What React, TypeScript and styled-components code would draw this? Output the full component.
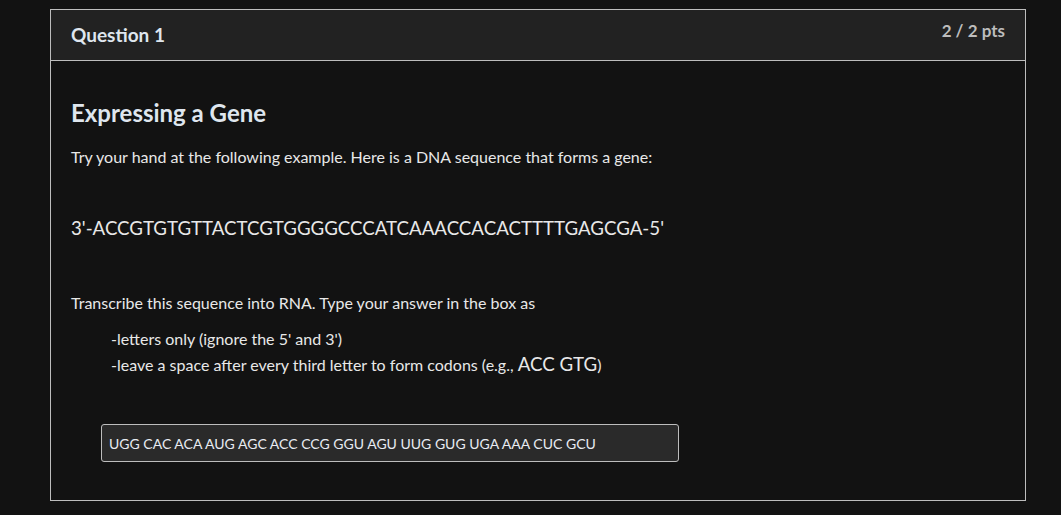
import styled, { createGlobalStyle } from "styled-components";

const GlobalStyle = createGlobalStyle`
  html, body {
    margin: 0;
    padding: 0;
    background-color: #121212;
  }
  body {
    font-family: Lato, "Open Sans", sans-serif;
    color: #e8e8e8;
  }
`;

const Page = styled.div`
  padding: 9px 35px 14px 50px;
  min-height: 515px;
  box-sizing: border-box;
`;

const Card = styled.div`
  border: 1px solid #bdbdbd;
  background-color: #121212;
`;

const Header = styled.div`
  display: flex;
  justify-content: space-between;
  align-items: flex-start;
  background-color: #222222;
  border-bottom: 1px solid #bdbdbd;
  height: 51px;
  box-sizing: border-box;
  padding: 13px 20px 0 20px;
`;

const QuestionName = styled.div`
  font-size: 19px;
  line-height: 23px;
  font-weight: 700;
  color: #dfe6ee;
`;

const Points = styled.div`
  font-size: 17px;
  line-height: 20px;
  font-weight: 700;
  color: #bdbdbd;
  margin-top: -2px;
`;

const Body = styled.div`
  padding: 37px 20px 38px 20px;
`;

const Title = styled.h2`
  margin: 0;
  font-size: 24px;
  line-height: 29px;
  font-weight: 700;
  color: #dfe6ee;
`;

const Text = styled.p<{ gap?: number }>`
  margin: ${(p) => p.gap ?? 0}px 0 0 0;
  font-size: 16px;
  line-height: 24px;
`;

const Sequence = styled.p`
  margin: 46px 0 0 0;
  font-size: 18.7px;
  line-height: 26px;
`;

const List = styled.div`
  margin: 12px 0 0 40px;
  display: flex;
  flex-direction: column;
  gap: 2px;
`;

const Big = styled.span`
  font-size: 18.7px;
  line-height: 1;
`;

const Answer = styled.div`
  margin: 47px 0 0 30px;
  width: 578px;
  height: 38px;
  box-sizing: border-box;
  border: 1px solid #bdbdbd;
  border-radius: 3px;
  background-color: #2a2a2a;
  padding: 0 7px;
  display: flex;
  align-items: center;
  font-size: 14px;
  color: #e8ecf2;
`;

export default function App() {
  return (
    <>
      <GlobalStyle />
      <Page>
        <Card>
          <Header>
            <QuestionName>Question 1</QuestionName>
            <Points>2 / 2 pts</Points>
          </Header>
          <Body>
            <Title>Expressing a Gene</Title>
            <Text gap={18}>
              Try your hand at the following example. Here is a DNA sequence
              that forms a gene:
            </Text>
            <Sequence>3'-ACCGTGTGTTACTCGTGGGGCCCATCAAACCACACTTTTGAGCGA-5'</Sequence>
            <Text gap={50}>
              Transcribe this sequence into RNA. Type your answer in the box as
            </Text>
            <List>
              <Text>-letters only (ignore the 5' and 3')</Text>
              <Text>
                -leave a space after every third letter to form codons (e.g.,{" "}
                <Big>ACC GTG</Big>)
              </Text>
            </List>
            <Answer>
              UGG CAC ACA AUG AGC ACC CCG GGU AGU UUG GUG UGA AAA CUC GCU
            </Answer>
          </Body>
        </Card>
      </Page>
    </>
  );
}
